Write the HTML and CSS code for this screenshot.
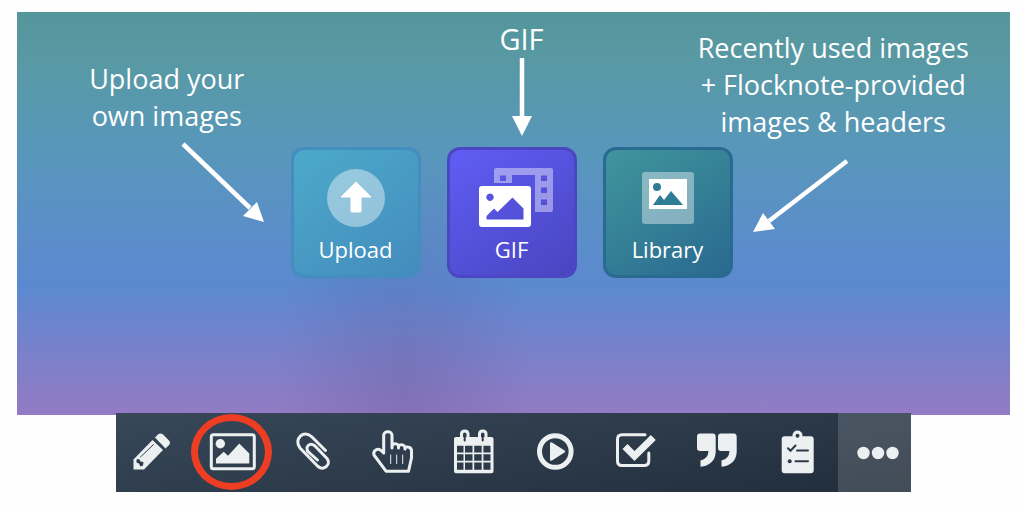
FILE: index.html
```html
<!DOCTYPE html>
<html lang="en">

<head>
  <meta charset="UTF-8">
  <meta name="viewport" content="width=device-width, initial-scale=1.0">
  <title>Adding images</title>
  <link rel="stylesheet" href="styles.css">
</head>

<body>
  <main class="panel">
    <div class="note note-upload">
      <p>Upload your<br>own images</p>
      <svg class="arrow" width="84" height="80" viewBox="0 0 84 80">
        <path d="M2 2L69 66" stroke="#fff" stroke-width="4.5" />
        <path d="M83 80L62 74L76 60Z" fill="#fff" />
      </svg>
    </div>

    <div class="center">
      <div class="note note-gif">
        <p>GIF</p>
        <svg class="arrow" width="20" height="78" viewBox="0 0 20 78">
          <path d="M10 0V62" stroke="#fff" stroke-width="4.500" />
          <path d="M0 58H20L10 78Z" fill="#fff" />
        </svg>
      </div>
      <div class="cards">
        <button type="button" class="card upload">
          <svg width="76" height="60" viewBox="0 0 76 60">
            <circle cx="38" cy="31" r="29" fill="#fff" fill-opacity=".42" />
            <path d="M38 15L53 30H43V44Q43 45 42 45H34Q33 45 33 44V30H23Z" fill="#fff" stroke="#fff" stroke-linejoin="round" />
          </svg>
          <span>Upload</span>
        </button>
        <button type="button" class="card gif">
          <svg width="76" height="60" viewBox="0 0 76 60">
            <path fill="#fff" fill-opacity=".42" fill-rule="evenodd" d="M20 3Q20 1 22 1H77Q79 1 79 3V43Q79 45 77 45H61V8H38V16H20ZM26 8.500V14H32V8.500ZM67 8.500V14H73V8.500ZM67 20.500V26H73V20.500ZM67 32.500V38H73V32.500Z" />
            <path fill="#fff" fill-rule="evenodd" d="M8 19H54Q57 19 57 22V57Q57 60 54 60H8Q5 60 5 57V22Q5 19 8 19ZM12.500 52.500H49.500V41.500L38.500 30.500L23.500 45L20 41.500L12.500 49ZM16 26.500A3.700 3.700 0 1 0 16.010 26.500Z" />
          </svg>
          <span>GIF</span>
        </button>
        <button type="button" class="card library">
          <svg width="76" height="60" viewBox="0 0 76 60">
            <rect x="12" y="5" width="52" height="52" rx="3" fill="#fff" fill-opacity=".4" />
            <path d="M19 12H57V42H19Z" fill="#fff" />
            <circle cx="27" cy="20" r="4" fill="#2f7c95" />
            <path d="M23 38L30 28L34 33L41 24L53 38Z" fill="#2f7c95" />
          </svg>
          <span>Library</span>
        </button>
      </div>
    </div>

    <div class="note note-library">
      <p>Recently used images<br>+ Flocknote-provided<br>images &amp; headers</p>
      <svg class="arrow" width="96" height="74" viewBox="0 0 96 74">
        <path d="M94 2L16 62" stroke="#fff" stroke-width="4.500" />
        <path d="M0 73L10 54L22 70Z" fill="#fff" />
      </svg>
    </div>
  </main>

  <nav class="toolbar">
    <div class="tools">
      <button type="button" class="tool" aria-label="Text">
        <svg viewBox="0 0 48 48">
          <path class="fill" d="M6.500 31.500L25.500 12L36 22L17 41.500H6.500Z" />
          <path class="fill" d="M28 9.500L31 6.500Q33.500 4.500 36 6.500L42 12.500Q44 15 42 17L38.500 20.500Z" />
          <path class="cut thin" d="M13.500 29L26.500 16.500" />
          <path class="dark" d="M9.500 31.500L12 31L13.500 33.500L16.500 34L16 37.500L13.500 38.500L12 35.500L9.500 34.500Z" />
        </svg>
      </button>
      <button type="button" class="tool active" aria-label="Image">
        <svg viewBox="0 0 48 48">
          <rect class="line" x="3.300" y="6.800" width="43" height="34" rx="2" />
          <circle class="fill" cx="12.300" cy="15.800" r="4.700" />
          <path class="fill" d="M8 35.500V30.800L15.700 23.800L20 27.800L31.300 15.500L41.300 25.500V35.500Z" />
        </svg>
      </button>
      <button type="button" class="tool" aria-label="Attachment">
        <svg viewBox="0 0 48 48">
          <path class="line" d="M36.500 22.500L23 9C15 1 4 11 11 20L29 38.500C35 43.500 42.500 36 38 30.500L26 18C20.500 13.500 15.500 19 19.500 24L28.500 32" />
        </svg>
      </button>
      <button type="button" class="tool" aria-label="Button">
        <svg viewBox="0 0 48 48">
          <path class="line" d="M13.700 25V7.500C13.700 2.500 22 2.500 22 7.500V17.500C24 15 28 15.500 28.500 18C30.500 16 34.500 16.500 35 19.500C38 18 41.500 19.500 41.500 23V30L38.500 43.200H16L4 27C2.500 22.500 8 19.500 11 22.500L13.700 25M22 17V20M28.500 18V20M35 19.500V21" />
          <path class="line thin" d="M20.700 27V35.500M26.700 27V35.500M32.700 27V35.500" />
        </svg>
      </button>
      <button type="button" class="tool" aria-label="Event">
        <svg viewBox="0 0 48 48">
          <path class="fill" fill-rule="evenodd" d="M6 9H41.500Q43.500 9 43.500 11V43Q43.500 45.200 41.500 45.200H6Q4 45.200 4 43V11Q4 9 6 9ZM7 17.800V24.500H13.500V17.800ZM15 17.800V24.500H22.500V17.800ZM24.200 17.800V24.500H31.700V17.800ZM33.400 17.800V24.500H40.500V17.800ZM7 26.200V32.800H13.500V26.200ZM15 26.200V32.800H22.500V26.200ZM24.200 26.200V32.800H31.700V26.200ZM33.400 26.200V32.800H40.500V26.200ZM7 34.500V41.800H13.500V34.500ZM15 34.500V41.800H22.500V34.500ZM24.200 34.500V41.800H31.700V34.500ZM33.400 34.500V41.800H40.500V34.500Z" />
          <path class="line" d="M11.500 12V6C11.500 2 18 2 18 6V12M29.500 12V6C29.500 2 36 2 36 6V12" />
          <path class="cut" d="M14.700 6.500V12.500M32.700 6.500V12.500" />
        </svg>
      </button>
      <button type="button" class="tool" aria-label="Video">
        <svg viewBox="0 0 48 48">
          <circle class="line thick" cx="24.300" cy="23.500" r="15.800" />
          <path class="fill" d="M19 15.500Q19 13.500 21 14.600L33.500 22.500Q35 23.500 33.500 24.500L21 32.400Q19 33.500 19 31.500Z" />
        </svg>
      </button>
      <button type="button" class="tool" aria-label="Sign-up">
        <svg viewBox="0 0 48 48">
          <path class="line" d="M33 6.800H10Q5.500 6.800 5.500 11.500V33Q5.500 37.500 10 37.500H32Q36.800 37.500 36.800 33V25" />
          <path class="check" d="M13 18.500L22.500 28L41.300 9.500" />
        </svg>
      </button>
      <button type="button" class="tool" aria-label="Quote">
        <svg viewBox="0 0 48 48">
          <path class="fill" d="M7 5.500H20Q22.700 5.500 22.700 9V24Q22 37 7.500 38.800V32.500Q15 31 15.500 23H7Q4 23 4 20V8.500Q4 5.500 7 5.500Z" />
          <path class="fill" d="M28 5.500H41Q43.700 5.500 43.700 9V24Q43 37 28.500 38.800V32.500Q36 31 36.500 23H28Q25 23 25 20V8.500Q25 5.500 28 5.500Z" />
        </svg>
      </button>
      <button type="button" class="tool" aria-label="Form">
        <svg viewBox="0 0 48 48">
          <circle class="fill" cx="23.500" cy="7.500" r="5" />
          <rect class="fill" x="7.700" y="8.200" width="32" height="37" rx="3" />
          <circle class="dark" cx="23.500" cy="7.800" r="2" />
          <path class="cut" d="M14 20.200L16.500 22.800L21.500 17.500M23 22.500H34M21.500 33.200H34" />
          <circle class="dark" cx="15.700" cy="33.200" r="2" />
        </svg>
      </button>
    </div>
    <button type="button" class="more" aria-label="More">
      <svg viewBox="0 0 48 48">
        <circle class="fill" cx="9.500" cy="24" r="6.200" />
        <circle class="fill" cx="24" cy="24" r="6.200" />
        <circle class="fill" cx="38.500" cy="24" r="6.200" />
      </svg>
    </button>
  </nav>
</body>

</html>
```

FILE: styles.css
```css
* {
  box-sizing: border-box;
}

body {
  margin: 0;
  padding: 12px 14px 18px 17px;
  background-color: #fefefe;
  font-family: 'Open Sans', 'Noto Sans', sans-serif;
  color: #fff;
}

button {
  margin: 0;
  padding: 0;
  border: none;
  background: none;
  color: inherit;
  font-family: inherit;
  cursor: pointer;
}

svg {
  display: block;
  overflow: visible;
}

p {
  margin: 0;
}

.panel {
  display: grid;
  grid-template-columns: 1fr auto 1fr;
  padding: 0 4px 137px 0;
  background:
    radial-gradient(ellipse 130px 240px at 39% 95%, rgba(90, 70, 130, 0.22), transparent),
    linear-gradient(#55969b 0%, #5899a5 13%, #5897bb 35%, #5b8fc8 53%, #5b89d0 68%, #6a85ce 76%, #7d80c9 87%, #937bc4 100%);
}

.note {
  display: flex;
  flex-direction: column;
  font-size: 27px;
  line-height: 37px;
  text-align: center;
  white-space: nowrap;
}

.note-upload {
  padding: 48px 0 0 26px;
}

.note-upload .arrow {
  align-self: flex-end;
  margin: 8px 26px 0 0;
}

.note-gif {
  align-items: center;
  gap: 1px;
  padding: 8px 0 11px 20px;
  font-size: 29px;
}

.note-library {
  margin: 0 36px 0 -36px;
  padding-top: 17px;
}

.note-library .arrow {
  margin: 19px 0 0 56px;
}

.cards {
  display: flex;
  gap: 26px;
}

.card {
  display: flex;
  flex-direction: column;
  align-items: center;
  gap: 6px;
  width: 130px;
  padding: 17px 0 10px;
  border: 3px solid;
  border-radius: 13px;
  font-size: 22px;
  line-height: 32px;
}

.upload {
  border-color: #448dbf;
  background: linear-gradient(145deg, #4caaca, #448bbd) padding-box;
  background-color: #448dbf;
}

.gif {
  border-color: #4b46c2;
  background: linear-gradient(145deg, #605df5, #4945c0) padding-box;
  background-color: #4b46c2;
}

.library {
  border-color: #296b90;
  background: linear-gradient(145deg, #40959c, #296990) padding-box;
  background-color: #296b90;
}

.toolbar {
  position: relative;
  display: flex;
  width: 80%;
  margin: -2px auto 0;
  background: linear-gradient(170deg, #384859, #212d3b);
}

.tools {
  display: flex;
  flex: 1;
  justify-content: space-between;
  padding: 15px 16px 16px 11px;
}

.tool {
  position: relative;
  width: 48px;
  height: 48px;
}

/* red marker ring around the image tool */
.active::after {
  content: '';
  position: absolute;
  inset: -14px -16px -14px -17px;
  border: 7px solid #ed3e23;
  border-radius: 50%;
}

.more {
  width: 73px;
  padding-left: 16px;
  background-color: rgba(255, 255, 255, 0.15);
}

.more svg {
  width: 48px;
  height: 48px;
}

.fill {
  fill: #edf0f1;
}

.dark {
  fill: #2d3a49;
}

.line {
  fill: none;
  stroke: #edf0f1;
  stroke-width: 3;
  stroke-linecap: round;
  stroke-linejoin: round;
}

.cut {
  fill: none;
  stroke: #2d3a49;
  stroke-width: 2;
  stroke-linecap: round;
}

.thin {
  stroke-width: 1;
}

.thick {
  stroke-width: 5;
}

.check {
  fill: none;
  stroke: #edf0f1;
  stroke-width: 7;
}
```
